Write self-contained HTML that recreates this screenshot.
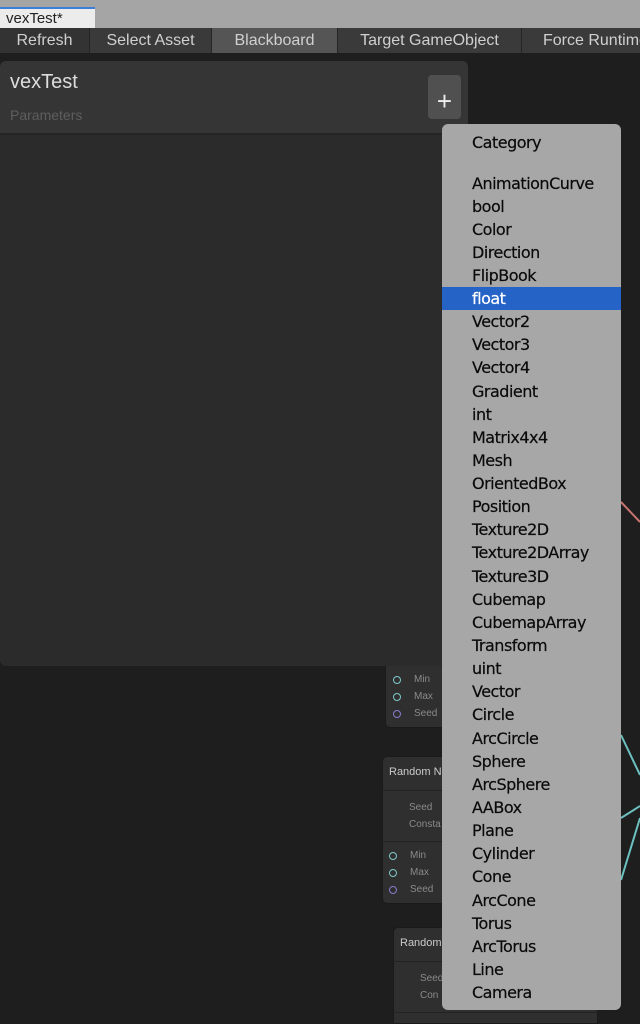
<!DOCTYPE html>
<html style="overflow:hidden;width:640px;height:1024px"><head><style>
*{margin:0;padding:0;box-sizing:border-box}
body{width:640px;height:1024px;background:#1e1e1e;position:relative;overflow:hidden;font-family:"Liberation Sans",sans-serif}
.abs{position:absolute}
.tab{position:absolute;top:28px;height:25px;background:#3a3a3a;color:#d0d0d0;font-size:16px;line-height:25px;text-align:center;border-right:1px solid #252525}
.node{position:absolute;background:#2f2f2f;border-radius:5px;border:1px solid #1a1a1a}
.lbl{position:absolute;font-size:10px;color:#8a8a8a}
.port{position:absolute;width:8px;height:8px;border-radius:50%;border:1.5px solid #7fc9c9}
.menu{position:absolute;left:442px;top:124px;width:179px;height:886px;background:#a7a7a7;border-radius:6px}
.it{position:absolute;left:30px;font-size:16px;color:#0a0a0a;font-family:"DejaVu Sans","Liberation Sans",sans-serif;letter-spacing:-0.5px;-webkit-text-stroke:0.2px #0a0a0a}
</style></head><body>
<div class="abs" style="left:0;top:0;width:640px;height:28px;background:#a5a5a5"></div>
<div class="abs" style="left:0;top:7px;width:95px;height:21px;background:#ececec;border-top:2px solid #3b7fd6;font-size:15px;line-height:19px;padding-left:6px;color:#222">vexTest*</div>
<div class="abs" style="left:0;top:28px;width:640px;height:25px;background:#333"></div>
<div class="tab" style="left:0;width:90px;background:#333">Refresh</div>
<div class="tab" style="left:90px;width:122px">Select Asset</div>
<div class="tab" style="left:212px;width:126px;background:#555">Blackboard</div>
<div class="tab" style="left:338px;width:184px">Target GameObject</div>
<div class="tab" style="left:522px;width:140px;text-align:left;padding-left:21px">Force Runtime</div>

<svg class="abs" style="left:0;top:0" width="640" height="1024">
<line x1="621" y1="502" x2="640" y2="522" stroke="#c87470" stroke-width="2"/>
<line x1="621" y1="735" x2="640" y2="775" stroke="#6cc0c0" stroke-width="2"/>
<line x1="621" y1="818" x2="640" y2="806" stroke="#6cc0c0" stroke-width="2"/>
<line x1="621" y1="880" x2="640" y2="818" stroke="#6cc0c0" stroke-width="2"/>
<line x1="588" y1="1024" x2="594" y2="1010" stroke="#6cc0c0" stroke-width="2"/>
</svg>

<div class="node" style="left:385px;top:650px;width:100px;height:78px"></div>
<div class="port" style="left:393px;top:676px"></div><div class="lbl" style="left:414px;top:674px">Min</div>
<div class="port" style="left:393px;top:693px"></div><div class="lbl" style="left:414px;top:691px">Max</div>
<div class="port" style="left:393px;top:710px;border-color:#8a7ad0"></div><div class="lbl" style="left:414px;top:708px">Seed</div>

<div class="node" style="left:382px;top:756px;width:100px;height:148px"></div>
<div class="abs" style="left:382px;top:790px;width:70px;height:1px;background:#222"></div>
<div class="abs" style="left:382px;top:841px;width:70px;height:1px;background:#222"></div>
<div class="lbl" style="left:389px;top:766px;color:#ccc;font-size:11px">Random N</div>
<div class="lbl" style="left:409px;top:802px">Seed</div>
<div class="lbl" style="left:409px;top:819px">Consta</div>
<div class="port" style="left:389px;top:852px"></div><div class="lbl" style="left:410px;top:850px">Min</div>
<div class="port" style="left:389px;top:869px"></div><div class="lbl" style="left:410px;top:867px">Max</div>
<div class="port" style="left:389px;top:886px;border-color:#8a7ad0"></div><div class="lbl" style="left:410px;top:884px">Seed</div>

<div class="node" style="left:393px;top:927px;width:205px;height:97px;border-radius:5px 5px 0 0"></div>
<div class="abs" style="left:393px;top:961px;width:60px;height:1px;background:#222"></div>
<div class="abs" style="left:393px;top:1012px;width:205px;height:1px;background:#222"></div>
<div class="lbl" style="left:400px;top:937px;color:#ccc;font-size:11px">Random</div>
<div class="lbl" style="left:420px;top:973px">Seed</div>
<div class="lbl" style="left:420px;top:990px">Con</div>

<div class="abs" style="left:0;top:61px;width:468px;height:605px;background:#2b2b2b;border-radius:6px"></div>
<div class="abs" style="left:0;top:61px;width:468px;height:74px;background:#353535;border-radius:6px 6px 0 0;border-bottom:2px solid #242424"></div>
<div class="abs" style="left:10px;top:71px;font-size:20px;color:#ddd">vexTest</div>
<div class="abs" style="left:10px;top:107px;font-size:14px;color:#5e5e5e">Parameters</div>
<div class="abs" style="left:428px;top:75px;width:33px;height:44px;background:#505050;border-radius:4px;color:#eee;font-size:26px;text-align:center;line-height:52px">+</div>

<div class="menu">
<div class="it" style="top:9px">Category</div>
<div class="abs" style="left:0;top:163px;width:179px;height:23px;background:#2563c6"></div>
</div>
<div class="abs" style="left:442px;top:124px;width:179px;height:886px">
<div class="it" style="top:50px">AnimationCurve</div>
<div class="it" style="top:73px">bool</div>
<div class="it" style="top:96px">Color</div>
<div class="it" style="top:119px">Direction</div>
<div class="it" style="top:142px">FlipBook</div>
<div class="it" style="top:165px;color:#fff;-webkit-text-stroke:0.2px #fff">float</div>
<div class="it" style="top:188px">Vector2</div>
<div class="it" style="top:211px">Vector3</div>
<div class="it" style="top:234px">Vector4</div>
<div class="it" style="top:258px">Gradient</div>
<div class="it" style="top:281px">int</div>
<div class="it" style="top:304px">Matrix4x4</div>
<div class="it" style="top:327px">Mesh</div>
<div class="it" style="top:350px">OrientedBox</div>
<div class="it" style="top:373px">Position</div>
<div class="it" style="top:396px">Texture2D</div>
<div class="it" style="top:419px">Texture2DArray</div>
<div class="it" style="top:443px">Texture3D</div>
<div class="it" style="top:466px">Cubemap</div>
<div class="it" style="top:489px">CubemapArray</div>
<div class="it" style="top:512px">Transform</div>
<div class="it" style="top:535px">uint</div>
<div class="it" style="top:558px">Vector</div>
<div class="it" style="top:581px">Circle</div>
<div class="it" style="top:605px">ArcCircle</div>
<div class="it" style="top:628px">Sphere</div>
<div class="it" style="top:651px">ArcSphere</div>
<div class="it" style="top:674px">AABox</div>
<div class="it" style="top:697px">Plane</div>
<div class="it" style="top:720px">Cylinder</div>
<div class="it" style="top:743px">Cone</div>
<div class="it" style="top:767px">ArcCone</div>
<div class="it" style="top:790px">Torus</div>
<div class="it" style="top:813px">ArcTorus</div>
<div class="it" style="top:836px">Line</div>
<div class="it" style="top:859px">Camera</div>
</div>
</body></html>
